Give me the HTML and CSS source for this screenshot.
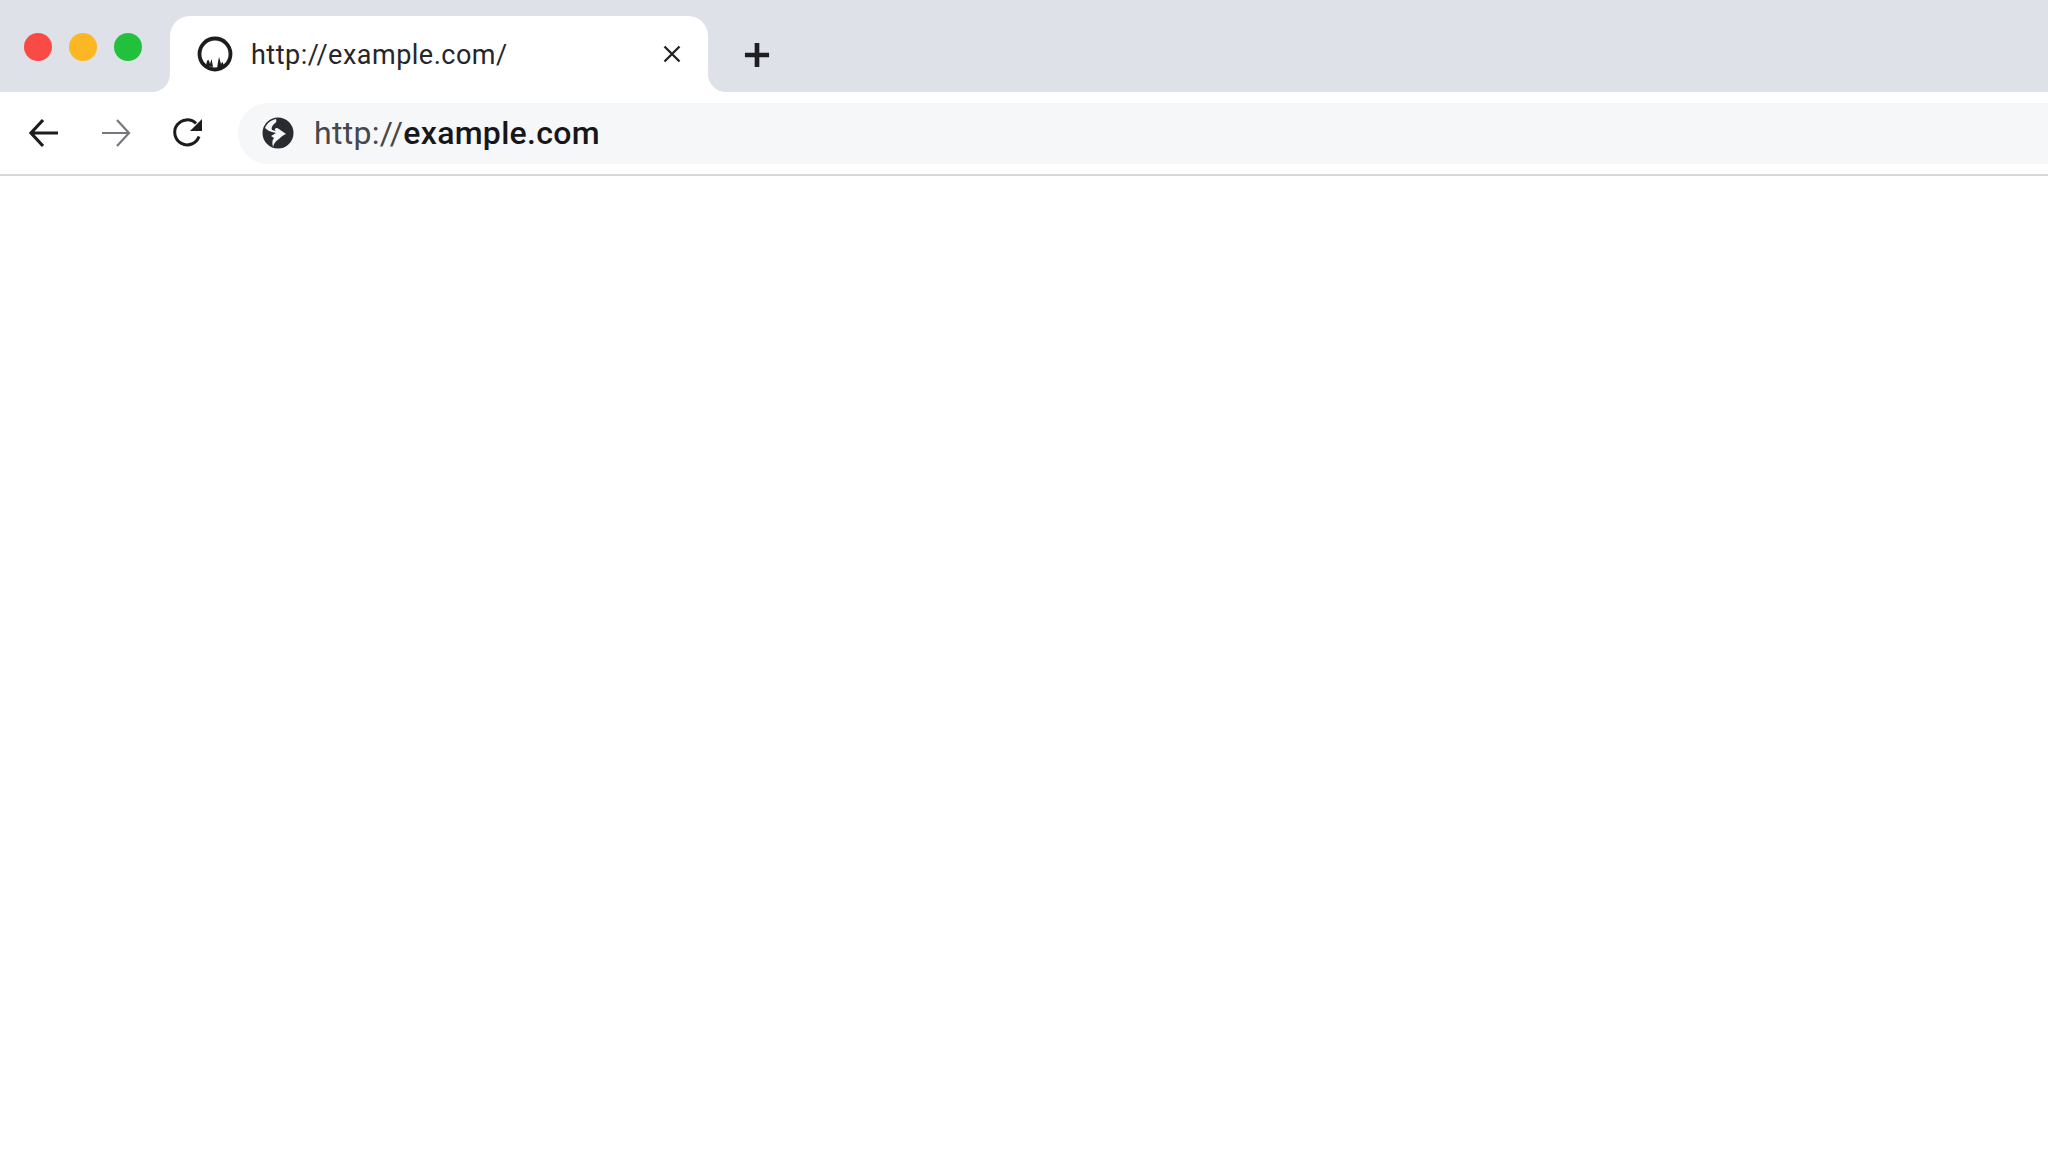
FILE: index.html
```html
<!DOCTYPE html>
<html lang="en">
<head>
<meta charset="utf-8">
<title>http://example.com/</title>
<link rel="stylesheet" href="styles.css">
</head>
<body>
<header class="chrome">
  <div class="strip">
    <div class="lights">
      <span class="light red"></span>
      <span class="light amber"></span>
      <span class="light green"></span>
    </div>
    <div class="tab-slot">
      <div class="tab">
        <svg class="favicon" viewBox="0 0 36 36"><circle cx="18" cy="18" r="15.5" fill="none" stroke="#1d1d1f" stroke-width="3.8"/><path d="M9 30c.5-3 1-6 2-6s1.500 2 2 4l1.500-5c.5 2 1 5 1.500 8zM20 33c.5-4 1-8 2-12 1 3 1.500 5 2 7 .5-1 1-2 1.500-2 .5 1 1 2 1.500 4l-5 4z" fill="#1d1d1f"/></svg>
        <span class="tab-title">http://example.com/</span>
        <svg class="tab-close" viewBox="0 0 24 24"><path d="M3 3l18 18M21 3L3 21" stroke="#222" stroke-width="2.800" fill="none"/></svg>
      </div>
    </div>
    <div class="strip-rest">
      <svg class="new-tab" viewBox="0 0 28 28"><path d="M14 1v26M1 14h26" stroke="#1f1f22" stroke-width="5" fill="none"/></svg>
    </div>
  </div>
  <div class="toolbar">
    <nav class="nav">
      <svg class="nav-icon" viewBox="0 0 32 32"><path d="M30 16H4M15 3L3 16l12 13" stroke="#1c1c1e" stroke-width="3.200" fill="none"/></svg>
      <svg class="nav-icon" viewBox="0 0 32 32"><path d="M2 16h27M17 3l12 13-12 13" stroke="#77787c" stroke-width="2.200" fill="none"/></svg>
      <svg class="nav-icon" viewBox="0 0 32 32"><path d="M27 19.500A12.500 12.500 0 1 1 24 6.500" stroke="#1c1c1e" stroke-width="3" fill="none"/><path d="M30 2v12H18z" fill="#1c1c1e"/></svg>
    </nav>
    <div class="omnibox">
      <svg class="globe" viewBox="0 0 32 32"><circle cx="16" cy="16" r="15.500" fill="#2a2b30"/><path d="M3 11C5 6 9 3 14 2c1 2 0 4-2 5-2 2-3 4-2 6l4 1c-2-1-1-3 1-3l2 1c2 2 5 3 7 5-3 1-5 3-7 5-3 2-5 4-6 8-1-4-1-7 1-9l-3-2 5-3-4-1c-3-1-5-2-7-4z" fill="#f5f6f8"/></svg>
      <span class="url"><span class="url-scheme">http://</span><span class="url-host">example.com</span></span>
    </div>
  </div>
</header>
<main class="content"></main>
</body>
</html>
```
FILE: styles.css
```css
html, body {
  margin: 0;
  height: 100%;
  background: #fff;
}
body {
  display: flex;
  flex-direction: column;
  font-family: Roboto, "Liberation Sans", sans-serif;
  overflow: hidden;
}
.chrome {
  flex: none;
  border-bottom: 2px solid #d9d9db;
}
.strip {
  display: flex;
  height: 92px;
}
.lights {
  flex: none;
  box-sizing: border-box;
  width: 170px;
  padding: 33px 0 0 24px;
  display: flex;
  gap: 17px;
  align-items: flex-start;
  background: #dee1e7;
  border-bottom-right-radius: 18px;
}
.light {
  width: 28px;
  height: 28px;
  border-radius: 50%;
}
.red { background: #f94a45; }
.amber { background: #fcb723; }
.green { background: #22c13d; }
.tab-slot {
  flex: none;
  width: 538px;
  padding-top: 16px;
  box-sizing: border-box;
  background: linear-gradient(#dee1e7 40px, #fff 40px);
}
.tab {
  height: 76px;
  box-sizing: border-box;
  display: flex;
  align-items: center;
  padding: 0 26px 0 27px;
  background: #fff;
  border-radius: 20px 20px 0 0;
}
.favicon {
  width: 36px;
  height: 36px;
  flex: none;
}
.tab-title {
  margin-left: 18px;
  padding-top: 2px;
  flex: 1;
  font-size: 27px;
  letter-spacing: 0.5px;
  color: #26262a;
  white-space: nowrap;
}
.tab-close {
  width: 20px;
  height: 20px;
  flex: none;
}
.strip-rest {
  flex: 1;
  display: flex;
  align-items: center;
  box-sizing: border-box;
  padding: 18px 0 0 36px;
  background: #dee1e7;
  border-bottom-left-radius: 18px;
}
.new-tab {
  width: 26px;
  height: 26px;
}
.toolbar {
  height: 82px;
  display: flex;
  align-items: center;
  box-sizing: border-box;
  padding: 0 0 0 28px;
}
.nav {
  flex: none;
  display: flex;
  align-items: center;
  gap: 40px;
  width: 210px;
}
.nav-icon {
  width: 32px;
  height: 32px;
  flex: none;
}
.omnibox {
  flex: 1;
  height: 61px;
  display: flex;
  align-items: center;
  padding-left: 24px;
  background: #f6f7f9;
  border-radius: 30px 0 0 30px;
}
.globe {
  width: 32px;
  height: 32px;
  flex: none;
}
.url {
  margin-left: 20px;
  font-size: 32px;
  white-space: nowrap;
  letter-spacing: 0.3px;
}
.url-scheme {
  color: #46474b;
}
.url-host {
  color: #17171a;
  font-weight: 500;
}
.content {
  flex: 1;
  background: #fff;
}
```
